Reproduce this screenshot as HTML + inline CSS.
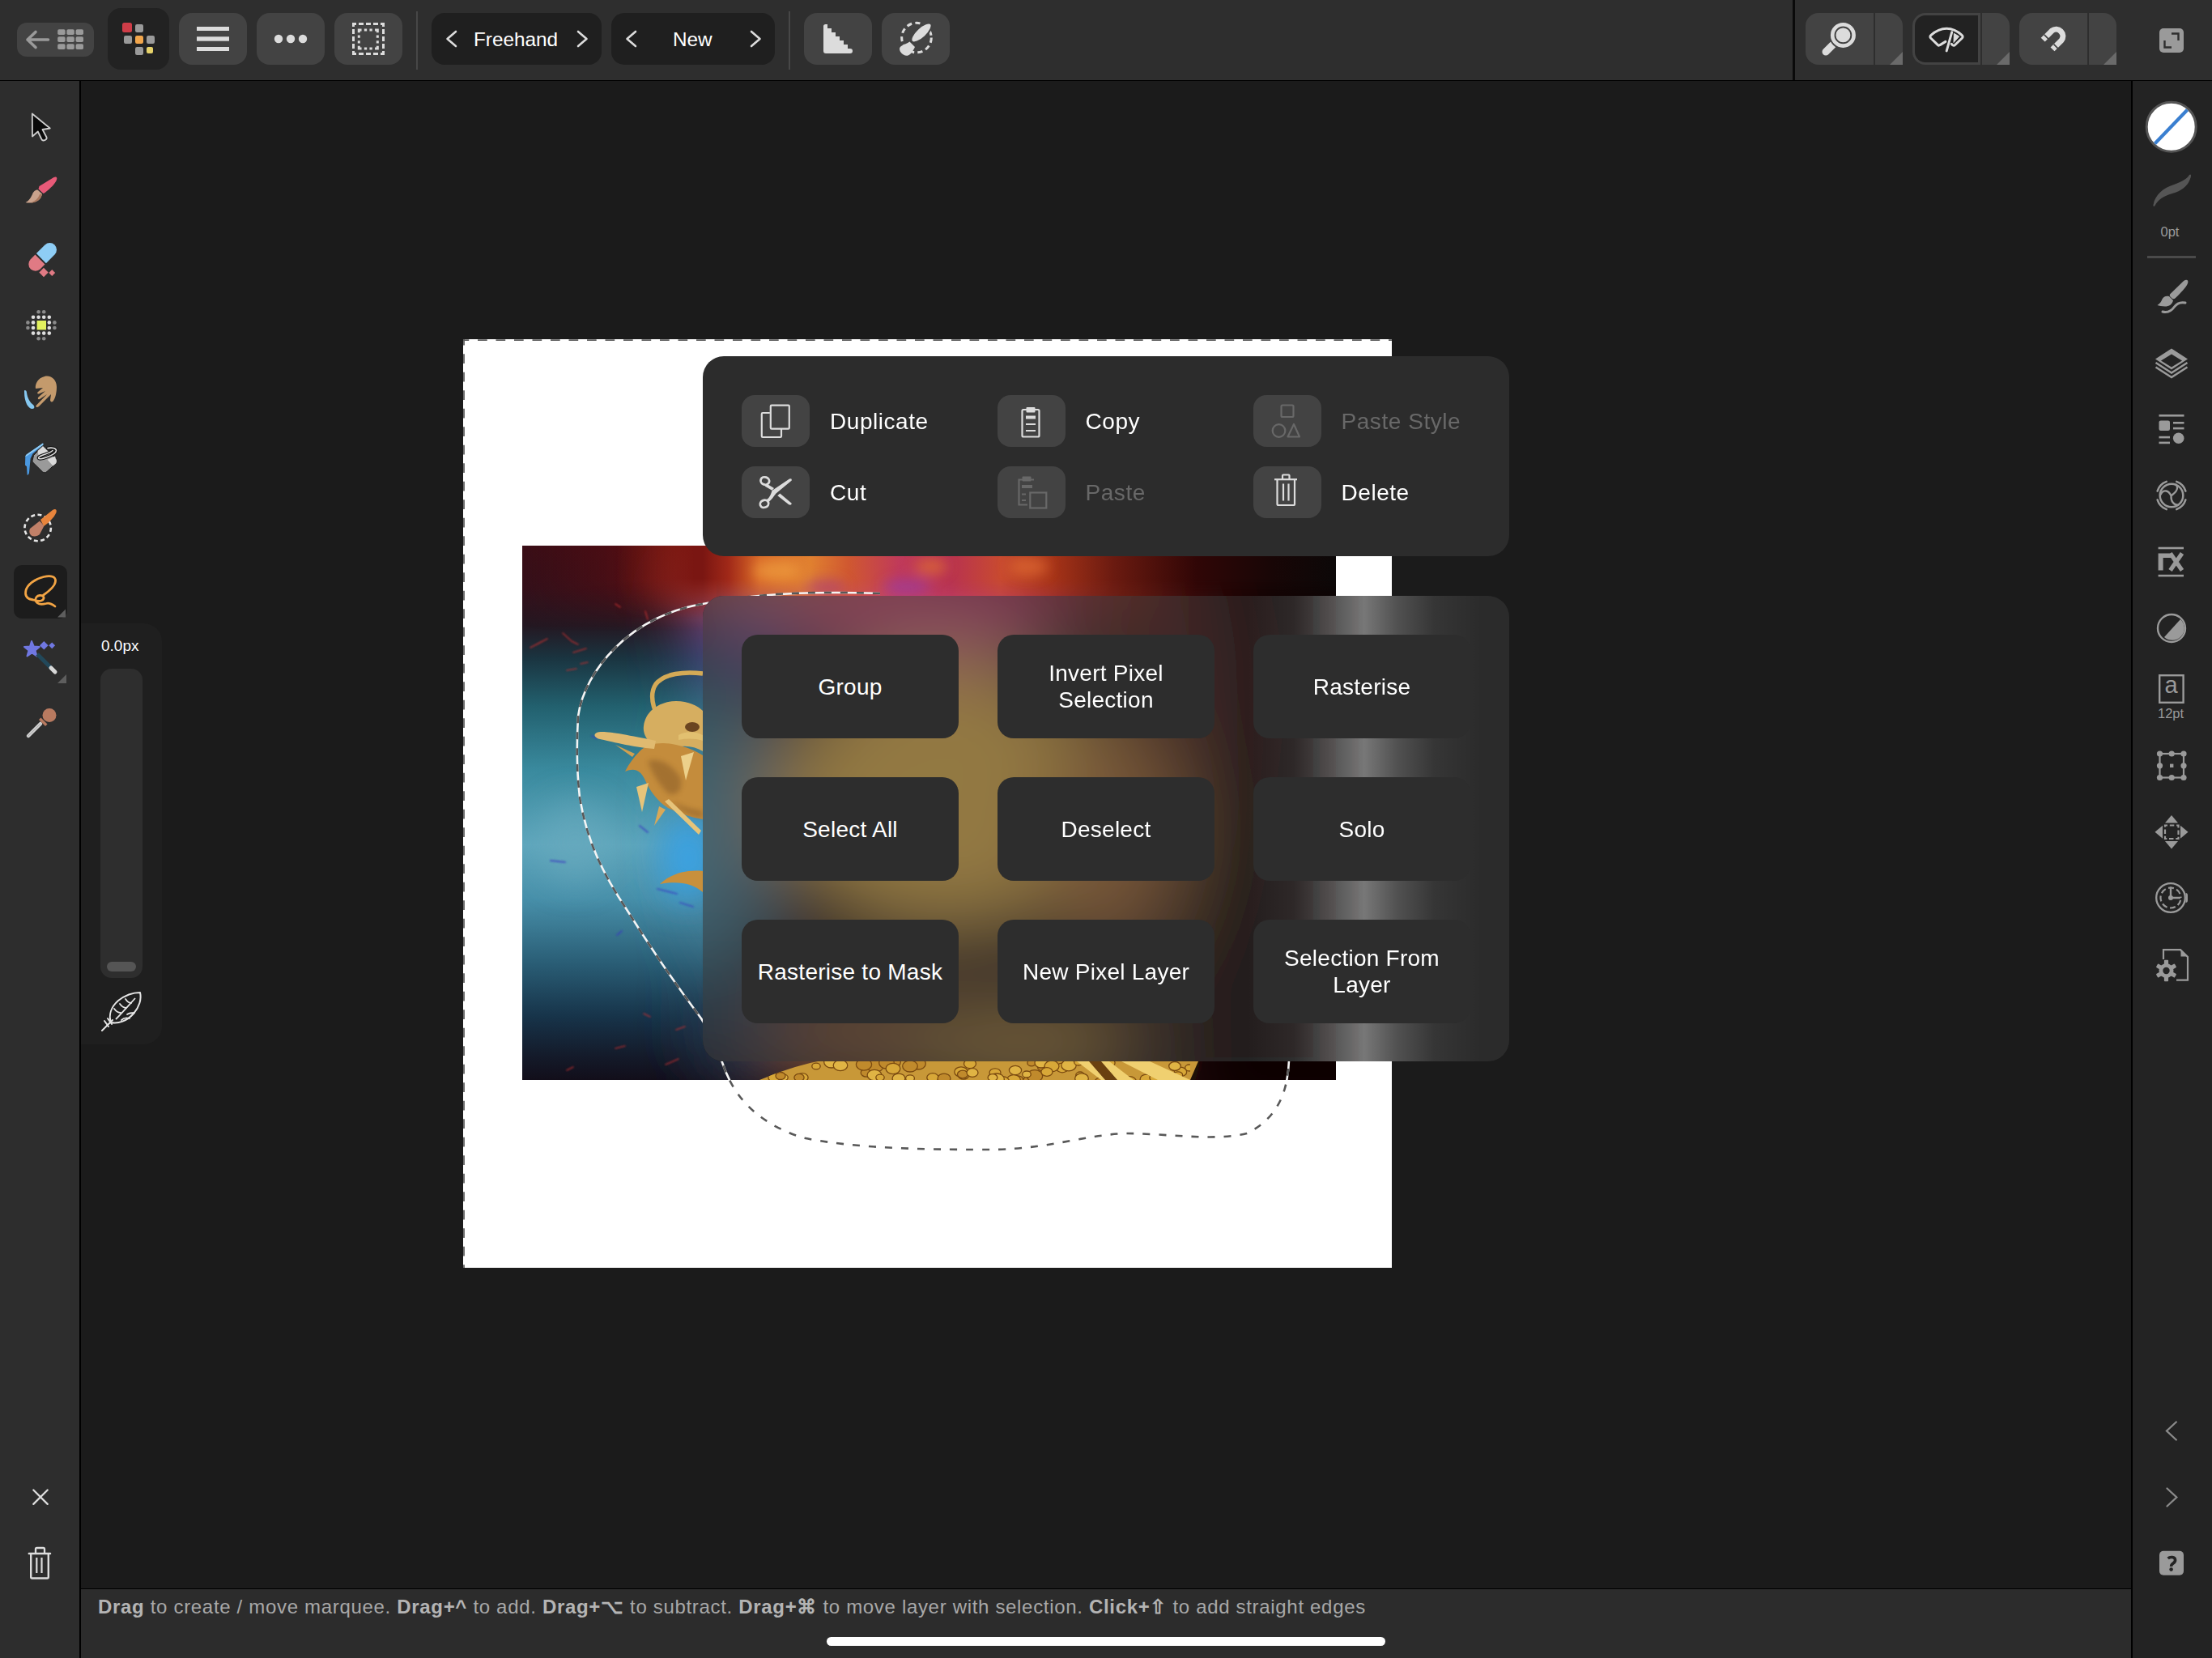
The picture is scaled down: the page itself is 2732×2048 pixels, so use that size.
<!DOCTYPE html>
<html><head><meta charset="utf-8">
<style>
*{margin:0;padding:0;box-sizing:border-box}
html,body{width:2732px;height:2048px;overflow:hidden;background:#1b1b1b;font-family:"Liberation Sans",sans-serif;position:relative}
.a{position:absolute}
.txt{white-space:nowrap}
#top{left:0;top:0;width:2732px;height:99px;background:#2e2e2e}
#topline{left:0;top:99px;width:2732px;height:1px;background:#000}
#left{left:0;top:100px;width:98px;height:1948px;background:#2d2d2d}
#leftline{left:98px;top:100px;width:2px;height:1948px;background:#000}
#right{left:2634px;top:100px;width:98px;height:1948px;background:#232323}
#rightline{left:2632px;top:100px;width:2px;height:1948px;background:#000}
#status{left:100px;top:1963px;width:2532px;height:85px;background:#2c2c2c}
#statusline{left:100px;top:1962px;width:2532px;height:1px;background:#000}
.btn{position:absolute;background:#434343;border-radius:16px}
.pill{position:absolute;background:#1f1f1f;border-radius:16px}
.ib{position:absolute;width:84px;height:64px;background:#434343;border-radius:16px}
.lbl{position:absolute;font-size:28px;color:#fff;white-space:nowrap;line-height:32px;letter-spacing:0.55px;margin-top:0.6px}
.gb{position:absolute;width:268px;height:128px;background:#2d2d2d;border-radius:20px;color:#fff;font-size:28px;display:flex;align-items:center;justify-content:center;text-align:center;line-height:33px;letter-spacing:0.25px}
</style></head><body>
<div id="top" class="a"></div>
<div id="topline" class="a"></div>
<div id="left" class="a"></div>
<div id="leftline" class="a"></div>
<div id="right" class="a"></div>
<div id="rightline" class="a"></div>
<div id="status" class="a"></div>
<div id="statusline" class="a"></div>

<svg class="a" style="left:0;top:0" width="2732" height="2048" viewBox="0 0 2732 2048">
<defs>
 <filter id="b1" filterUnits="userSpaceOnUse" x="600" y="600" width="1100" height="800"><feGaussianBlur stdDeviation="0.8"/></filter>
 <filter id="b3" filterUnits="userSpaceOnUse" x="600" y="600" width="1100" height="800"><feGaussianBlur stdDeviation="3"/></filter>
 <filter id="b8" filterUnits="userSpaceOnUse" x="600" y="600" width="1100" height="800"><feGaussianBlur stdDeviation="8"/></filter>
 <filter id="b20" filterUnits="userSpaceOnUse" x="500" y="500" width="1300" height="1000"><feGaussianBlur stdDeviation="20"/></filter>
 <filter id="bigb40" filterUnits="userSpaceOnUse" x="400" y="400" width="1500" height="1200"><feGaussianBlur stdDeviation="40"/></filter>
 <filter id="pblur" filterUnits="userSpaceOnUse" x="600" y="500" width="1500" height="1000"><feGaussianBlur stdDeviation="30"/></filter>
 <clipPath id="imgclip"><rect x="645" y="674" width="1005" height="660"/></clipPath>
 <clipPath id="pclip"><rect x="868" y="736" width="996" height="575" rx="26"/></clipPath>
 <linearGradient id="gbase" gradientUnits="userSpaceOnUse" x1="0" y1="674" x2="0" y2="1334">
   <stop offset="0" stop-color="#3a0e16"/>
   <stop offset="0.08" stop-color="#34101a"/>
   <stop offset="0.15" stop-color="#241822"/>
   <stop offset="0.21" stop-color="#1a3440"/>
   <stop offset="0.3" stop-color="#22606e"/>
   <stop offset="0.42" stop-color="#3a8a9e"/>
   <stop offset="0.56" stop-color="#5ea6bc"/>
   <stop offset="0.66" stop-color="#4890aa"/>
   <stop offset="0.78" stop-color="#2a5e76"/>
   <stop offset="0.88" stop-color="#17344a"/>
   <stop offset="0.95" stop-color="#141c2c"/>
   <stop offset="1" stop-color="#120e1a"/>
 </linearGradient>
 <linearGradient id="redtop" gradientUnits="userSpaceOnUse" x1="645" y1="0" x2="880" y2="0">
   <stop offset="0" stop-color="#5a0a10" stop-opacity="0"/>
   <stop offset="0.6" stop-color="#6a0e10" stop-opacity="0.5"/>
   <stop offset="1" stop-color="#9a1a10" stop-opacity="0.9"/>
 </linearGradient>
 <linearGradient id="redtopv" x1="0" y1="0" x2="0" y2="1">
   <stop offset="0" stop-color="#fff"/>
   <stop offset="0.3" stop-color="#fff"/>
   <stop offset="0.75" stop-color="#000"/>
 </linearGradient>
 <mask id="rtm"><rect x="645" y="674" width="240" height="140" fill="url(#redtopv)"/></mask>
 <linearGradient id="band" gradientUnits="userSpaceOnUse" x1="1540" y1="0" x2="1830" y2="0">
   <stop offset="0" stop-color="#fff" stop-opacity="0"/>
   <stop offset="0.2" stop-color="#fff" stop-opacity="0.05"/>
   <stop offset="0.34" stop-color="#fff" stop-opacity="0.18"/>
   <stop offset="0.5" stop-color="#fff" stop-opacity="0.36"/>
   <stop offset="0.64" stop-color="#fff" stop-opacity="0.18"/>
   <stop offset="0.8" stop-color="#fff" stop-opacity="0.05"/>
   <stop offset="1" stop-color="#fff" stop-opacity="0"/>
 </linearGradient>
 <linearGradient id="lfade" gradientUnits="userSpaceOnUse" x1="645" y1="0" x2="1000" y2="0">
   <stop offset="0" stop-color="#fff"/>
   <stop offset="0.62" stop-color="#fff"/>
   <stop offset="1" stop-color="#000"/>
 </linearGradient>
 <mask id="lmask"><rect x="645" y="674" width="1005" height="660" fill="url(#lfade)"/></mask>
 <g id="img">
  <g clip-path="url(#imgclip)">
   <rect x="645" y="674" width="1005" height="660" fill="#1c0c10"/>
   <rect x="645" y="674" width="1005" height="660" fill="url(#gbase)" mask="url(#lmask)"/>
   <rect x="645" y="674" width="240" height="140" fill="url(#redtop)" mask="url(#rtm)"/>
   <g filter="url(#bigb40)">
    <rect x="1470" y="600" width="300" height="800" fill="#100505"/>
    <ellipse cx="1430" cy="860" rx="70" ry="200" fill="#4a1414"/>
    <ellipse cx="1020" cy="705" rx="190" ry="45" fill="#e07028"/>
    <ellipse cx="1290" cy="705" rx="120" ry="40" fill="#b83a20"/>
    <ellipse cx="1140" cy="765" rx="170" ry="65" fill="#c83c7c"/>
    <ellipse cx="920" cy="790" rx="70" ry="60" fill="#5a4a98"/>
    <ellipse cx="900" cy="1020" rx="45" ry="170" fill="#4a8098"/>
    <ellipse cx="1170" cy="985" rx="220" ry="170" fill="#e6b44a"/>
    <ellipse cx="1370" cy="1040" rx="80" ry="150" fill="#b07034"/>
    <ellipse cx="1060" cy="1275" rx="130" ry="60" fill="#8a5a38"/>
    <ellipse cx="1260" cy="1290" rx="150" ry="60" fill="#a88038"/>
    <ellipse cx="915" cy="1270" rx="50" ry="70" fill="#2a3a50"/>
   </g>
  </g>
 </g>
</defs>
<rect x="572" y="419" width="1147" height="1147" fill="#fff"/>
<use href="#img"/>
<g clip-path="url(#imgclip)">
 <!-- top strip nebula texture -->
 <linearGradient id="topstrip" gradientUnits="userSpaceOnUse" x1="868" y1="0" x2="1650" y2="0">
  <stop offset="0" stop-color="#7a1612"/>
  <stop offset="0.04" stop-color="#a02818"/>
  <stop offset="0.09" stop-color="#d86828"/>
  <stop offset="0.17" stop-color="#e08030"/>
  <stop offset="0.23" stop-color="#d05830"/>
  <stop offset="0.31" stop-color="#c03a5a"/>
  <stop offset="0.39" stop-color="#b83250"/>
  <stop offset="0.47" stop-color="#c84a30"/>
  <stop offset="0.55" stop-color="#a83418"/>
  <stop offset="0.65" stop-color="#6a1a10"/>
  <stop offset="0.78" stop-color="#300606"/>
  <stop offset="0.9" stop-color="#180606"/>
  <stop offset="1" stop-color="#0c0808"/>
 </linearGradient>
 <linearGradient id="tsl" x1="0" y1="0" x2="1" y2="0"><stop offset="0" stop-color="#7a1612" stop-opacity="0"/><stop offset="0.9" stop-color="#7a1612"/><stop offset="1" stop-color="#7a1612"/></linearGradient>
 <mask id="tsm"><rect x="860" y="674" width="800" height="90" fill="url(#tslv)"/></mask>
 <rect x="868" y="674" width="782" height="90" fill="url(#topstrip)" mask="url(#tsm)"/>
 <linearGradient id="tslv" x1="0" y1="0" x2="0" y2="1"><stop offset="0" stop-color="#fff"/><stop offset="0.45" stop-color="#fff"/><stop offset="1" stop-color="#000"/></linearGradient>
 <mask id="tslm"><rect x="760" y="674" width="112" height="90" fill="url(#tslv)"/></mask>
 <rect x="760" y="674" width="108" height="90" fill="url(#tsl)" mask="url(#tslm)"/>
 <g filter="url(#b8)" opacity="0.7">
  <ellipse cx="960" cy="705" rx="30" ry="12" fill="#f0a040"/>
  <ellipse cx="1020" cy="725" rx="25" ry="10" fill="#b04070"/>
  <ellipse cx="1150" cy="700" rx="20" ry="10" fill="#e07030"/>
  <ellipse cx="1120" cy="725" rx="30" ry="10" fill="#9a3aa0"/>
  <ellipse cx="1270" cy="700" rx="25" ry="12" fill="#e06a30"/>
 </g>
 <g filter="url(#b20)">
  <ellipse cx="850" cy="1060" rx="35" ry="55" fill="#3aa2e2"/>
  <ellipse cx="710" cy="1040" rx="45" ry="50" fill="#6aaabe" opacity="0.6"/>
 </g>
 <!-- speckles -->
 <g filter="url(#b1)" stroke="#c83030" fill="none" stroke-width="1.6" opacity="0.75" stroke-linecap="round">
  <path d="M655 800 L 670 792 M 661 797 L 676 789"/>
  <path d="M695 782 L 706 792 L 714 796"/>
  <path d="M708 806 L 724 801"/>
  <path d="M717 820 L 726 818"/>
  <path d="M760 746 L 766 750 M 797 755 L 800 765"/>
  <path d="M700 828 L 712 826"/>
  <path d="M795 1252 L 803 1256 M 760 1295 L 772 1292 M 822 1315 L 838 1308 M 835 1272 L 846 1268 M 700 1322 L 708 1318"/>
 </g>
 <g filter="url(#b1)" stroke="#3a3ac0" fill="none" stroke-width="1.8" opacity="0.75" stroke-linecap="round">
  <path d="M680 1063 L 698 1065"/>
  <path d="M812 1098 L 836 1104 M 840 1115 L 856 1120"/>
  <path d="M762 1155 L 768 1150"/>
  <path d="M731 909 L 737 912"/>
  <path d="M790 1020 L 800 1028"/>
 </g>
 <!-- bottom golden scales -->
 <path d="M938 1334 C 960 1325 985 1316 1010 1311 L 1480 1311 L 1470 1334 Z" fill="#c89838"/>
 <clipPath id="coinclip"><path d="M938 1334 C 960 1325 985 1316 1010 1311 L 1470 1311 L 1470 1334 Z"/></clipPath>
 <g clip-path="url(#coinclip)">
  <ellipse cx="1070" cy="1325" rx="6.8" ry="5.1" fill="#c08a2c" stroke="#7a4a10" stroke-width="1.3"/>
  <ellipse cx="1274" cy="1313" rx="5.1" ry="3.8" fill="#c08a2c" stroke="#7a4a10" stroke-width="1.3"/>
  <ellipse cx="1081" cy="1317" rx="10.0" ry="7.5" fill="#c08a2c" stroke="#7a4a10" stroke-width="1.3"/>
  <ellipse cx="1229" cy="1325" rx="7.0" ry="5.2" fill="#d8a838" stroke="#7a4a10" stroke-width="1.3"/>
  <ellipse cx="1067" cy="1315" rx="9.6" ry="7.2" fill="#c08a2c" stroke="#7a4a10" stroke-width="1.3"/>
  <ellipse cx="1334" cy="1328" rx="5.3" ry="4.0" fill="#d8a838" stroke="#7a4a10" stroke-width="1.3"/>
  <ellipse cx="1103" cy="1312" rx="9.3" ry="7.0" fill="#c08a2c" stroke="#7a4a10" stroke-width="1.3"/>
  <ellipse cx="1257" cy="1334" rx="6.9" ry="5.2" fill="#c08a2c" stroke="#7a4a10" stroke-width="1.3"/>
  <ellipse cx="1152" cy="1331" rx="7.2" ry="5.4" fill="#d8a838" stroke="#7a4a10" stroke-width="1.3"/>
  <ellipse cx="1406" cy="1313" rx="5.7" ry="4.3" fill="#d8a838" stroke="#7a4a10" stroke-width="1.3"/>
  <ellipse cx="1080" cy="1328" rx="8.9" ry="6.7" fill="#e0b444" stroke="#7a4a10" stroke-width="1.3"/>
  <ellipse cx="1166" cy="1332" rx="7.9" ry="5.9" fill="#c08a2c" stroke="#7a4a10" stroke-width="1.3"/>
  <ellipse cx="1252" cy="1334" rx="8.4" ry="6.3" fill="#d8a838" stroke="#7a4a10" stroke-width="1.3"/>
  <ellipse cx="1395" cy="1336" rx="8.4" ry="6.3" fill="#d8a838" stroke="#7a4a10" stroke-width="1.3"/>
  <ellipse cx="1312" cy="1319" rx="7.7" ry="5.8" fill="#d8a838" stroke="#7a4a10" stroke-width="1.3"/>
  <ellipse cx="1320" cy="1316" rx="9.2" ry="6.9" fill="#e0b444" stroke="#7a4a10" stroke-width="1.3"/>
  <ellipse cx="1095" cy="1313" rx="9.3" ry="7.0" fill="#c08a2c" stroke="#7a4a10" stroke-width="1.3"/>
  <ellipse cx="991" cy="1331" rx="7.1" ry="5.3" fill="#d8a838" stroke="#7a4a10" stroke-width="1.3"/>
  <ellipse cx="956" cy="1331" rx="7.1" ry="5.3" fill="#d8a838" stroke="#7a4a10" stroke-width="1.3"/>
  <ellipse cx="968" cy="1331" rx="5.2" ry="3.9" fill="#e0b444" stroke="#7a4a10" stroke-width="1.3"/>
  <ellipse cx="1234" cy="1334" rx="6.4" ry="4.8" fill="#d8a838" stroke="#7a4a10" stroke-width="1.3"/>
  <ellipse cx="1469" cy="1319" rx="5.4" ry="4.0" fill="#d8a838" stroke="#7a4a10" stroke-width="1.3"/>
  <ellipse cx="1443" cy="1335" rx="6.5" ry="4.8" fill="#e0b444" stroke="#7a4a10" stroke-width="1.3"/>
  <ellipse cx="1027" cy="1312" rx="9.3" ry="7.0" fill="#e0b444" stroke="#7a4a10" stroke-width="1.3"/>
  <ellipse cx="1134" cy="1314" rx="9.3" ry="7.0" fill="#c08a2c" stroke="#7a4a10" stroke-width="1.3"/>
  <ellipse cx="1187" cy="1324" rx="8.2" ry="6.2" fill="#d8a838" stroke="#7a4a10" stroke-width="1.3"/>
  <ellipse cx="1271" cy="1335" rx="7.5" ry="5.7" fill="#c08a2c" stroke="#7a4a10" stroke-width="1.3"/>
  <ellipse cx="1278" cy="1329" rx="9.7" ry="7.3" fill="#c08a2c" stroke="#7a4a10" stroke-width="1.3"/>
  <ellipse cx="1458" cy="1324" rx="7.7" ry="5.8" fill="#d8a838" stroke="#7a4a10" stroke-width="1.3"/>
  <ellipse cx="1359" cy="1336" rx="6.6" ry="4.9" fill="#c08a2c" stroke="#7a4a10" stroke-width="1.3"/>
  <ellipse cx="1268" cy="1327" rx="5.3" ry="4.0" fill="#e0b444" stroke="#7a4a10" stroke-width="1.3"/>
  <ellipse cx="1190" cy="1328" rx="6.8" ry="5.1" fill="#e0b444" stroke="#7a4a10" stroke-width="1.3"/>
  <ellipse cx="1332" cy="1312" rx="5.3" ry="4.0" fill="#d8a838" stroke="#7a4a10" stroke-width="1.3"/>
  <ellipse cx="1451" cy="1317" rx="7.3" ry="5.5" fill="#e0b444" stroke="#7a4a10" stroke-width="1.3"/>
  <ellipse cx="1038" cy="1316" rx="8.8" ry="6.6" fill="#e0b444" stroke="#7a4a10" stroke-width="1.3"/>
  <ellipse cx="1103" cy="1320" rx="8.9" ry="6.6" fill="#d8a838" stroke="#7a4a10" stroke-width="1.3"/>
  <ellipse cx="1455" cy="1328" rx="5.7" ry="4.2" fill="#d8a838" stroke="#7a4a10" stroke-width="1.3"/>
  <ellipse cx="1288" cy="1318" rx="6.6" ry="5.0" fill="#c08a2c" stroke="#7a4a10" stroke-width="1.3"/>
  <ellipse cx="1286" cy="1313" rx="8.0" ry="6.0" fill="#e0b444" stroke="#7a4a10" stroke-width="1.3"/>
  <ellipse cx="1299" cy="1317" rx="9.0" ry="6.8" fill="#d8a838" stroke="#7a4a10" stroke-width="1.3"/>
  <ellipse cx="987" cy="1331" rx="6.1" ry="4.6" fill="#c08a2c" stroke="#7a4a10" stroke-width="1.3"/>
  <ellipse cx="1087" cy="1331" rx="5.2" ry="3.9" fill="#d8a838" stroke="#7a4a10" stroke-width="1.3"/>
  <ellipse cx="1110" cy="1332" rx="7.9" ry="5.9" fill="#e0b444" stroke="#7a4a10" stroke-width="1.3"/>
  <ellipse cx="1124" cy="1332" rx="5.4" ry="4.1" fill="#e0b444" stroke="#7a4a10" stroke-width="1.3"/>
  <ellipse cx="1254" cy="1322" rx="7.6" ry="5.7" fill="#e0b444" stroke="#7a4a10" stroke-width="1.3"/>
  <ellipse cx="1189" cy="1327" rx="6.5" ry="4.8" fill="#c08a2c" stroke="#7a4a10" stroke-width="1.3"/>
  <ellipse cx="964" cy="1329" rx="6.0" ry="4.5" fill="#c08a2c" stroke="#7a4a10" stroke-width="1.3"/>
  <ellipse cx="1440" cy="1333" rx="9.9" ry="7.5" fill="#c08a2c" stroke="#7a4a10" stroke-width="1.3"/>
  <ellipse cx="1238" cy="1336" rx="8.6" ry="6.4" fill="#d8a838" stroke="#7a4a10" stroke-width="1.3"/>
  <ellipse cx="1336" cy="1332" rx="8.3" ry="6.2" fill="#e0b444" stroke="#7a4a10" stroke-width="1.3"/>
  <ellipse cx="1231" cy="1333" rx="9.3" ry="7.0" fill="#e0b444" stroke="#7a4a10" stroke-width="1.3"/>
  <ellipse cx="1008" cy="1317" rx="5.2" ry="3.9" fill="#d8a838" stroke="#7a4a10" stroke-width="1.3"/>
  <ellipse cx="1416" cy="1333" rx="7.9" ry="5.9" fill="#d8a838" stroke="#7a4a10" stroke-width="1.3"/>
  <ellipse cx="1198" cy="1314" rx="7.5" ry="5.6" fill="#d8a838" stroke="#7a4a10" stroke-width="1.3"/>
  <ellipse cx="1293" cy="1324" rx="7.1" ry="5.3" fill="#d8a838" stroke="#7a4a10" stroke-width="1.3"/>
  <ellipse cx="1124" cy="1317" rx="9.3" ry="7.0" fill="#c08a2c" stroke="#7a4a10" stroke-width="1.3"/>
  <ellipse cx="1371" cy="1313" rx="6.1" ry="4.6" fill="#d8a838" stroke="#7a4a10" stroke-width="1.3"/>
  <ellipse cx="1226" cy="1331" rx="5.9" ry="4.4" fill="#e0b444" stroke="#7a4a10" stroke-width="1.3"/>
  <ellipse cx="1429" cy="1331" rx="9.1" ry="6.8" fill="#d8a838" stroke="#7a4a10" stroke-width="1.3"/>
  <ellipse cx="1201" cy="1325" rx="7.0" ry="5.3" fill="#e0b444" stroke="#7a4a10" stroke-width="1.3"/>
  <path d="M1330 1311 L1370 1311 L1400 1334 L1360 1334Z M1385 1311 L1420 1311 L1470 1334 L1430 1334Z" fill="#f0d070"/>
  <path d="M1345 1311 L1360 1311 L1380 1334 L1365 1334Z" fill="#6a4010"/>
 </g>
 <!-- dragon head -->
 <g>
  <path d="M826 906 C 808 884 800 860 810 845 C 820 832 845 829 868 832" stroke="#d4aa56" stroke-width="5.5" fill="none"/>
  <path d="M795 897 C 797 878 815 866 835 866 C 850 866 862 872 868 878 L868 928 C 855 920 840 920 825 926 L 803 917 C 797 911 794 904 795 897 Z" fill="#d6ae60"/>
  <path d="M790 928 C 800 918 818 916 835 920 C 850 923 860 928 868 933 L868 1012 C 855 1010 840 1005 825 998 C 812 990 802 976 796 962 C 791 952 784 948 772 953 C 777 943 783 935 790 928 Z" fill="#c48c3c"/>
  <ellipse cx="855" cy="898" rx="9" ry="6" fill="#6a4420"/>
  <path d="M838 908 C 848 902 860 904 868 908 L868 915 C 858 912 848 912 838 914Z" fill="#e2c070"/>
  <g filter="url(#b3)" fill="#5a3418" opacity="0.3">
   <path d="M800 940 C 815 935 830 945 840 960 C 845 975 835 985 825 980 C 815 970 805 955 800 940Z"/>
   <path d="M830 990 C 840 995 855 1000 868 1002 L868 1010 C 850 1008 838 1000 830 990Z"/>
  </g>
  <path d="M737 905 C 745 902 770 907 810 915 L 808 925 C 780 923 752 915 741 913 C 735 912 732 907 737 905Z" fill="#e0ba70"/>
  <path d="M760 920 L 784 931 L 781 935 Z" fill="#d0a050"/>
  <path d="M793 1003 L 786 972 L 801 967 Z" fill="#e6c47a"/>
  <path d="M847 964 L 841 934 L 857 929 Z" fill="#ecd08a"/>
  <path d="M821 990 L 826 987 L 866 1026 L 863 1031 Z" fill="#e6c47a"/>
  <path d="M808 1020 L 814 996 L 822 1000 Z" fill="#d8a858"/>
  <path d="M815 1092 C 830 1078 850 1074 868 1076 L 868 1102 C 855 1090 835 1088 815 1092Z" fill="#c8903c"/>
 </g>
</g>
<!-- doc border dashes top & left -->
<line x1="572" y1="420.2" x2="1719" y2="420.2" stroke="#5e5e5e" stroke-width="1.8" stroke-dasharray="11.7 10.8" stroke-dashoffset="4.5"/>
<line x1="573" y1="419" x2="573" y2="1566" stroke="#5e5e5e" stroke-width="1.8" stroke-dasharray="11.7 10.8" stroke-dashoffset="4.2"/>
<!-- lasso -->
<path d="M1087 733 C 1000 730 930 733 868 746 C 830 752 790 770 760 800 C 735 825 718 855 714 885 C 712 920 712 950 716 985 C 725 1040 745 1080 775 1125 C 800 1165 830 1210 866 1258 C 880 1280 888 1300 893 1315 C 905 1350 930 1385 990 1405 C 1060 1420 1160 1420 1230 1420 C 1300 1418 1340 1402 1390 1400 C 1440 1400 1500 1410 1540 1400 C 1570 1385 1590 1360 1592 1310" fill="none" stroke="#f4f4f4" stroke-width="2.6" clip-path="url(#imgclip)"/>
<path d="M1087 733 C 1000 730 930 733 868 746 C 830 752 790 770 760 800 C 735 825 718 855 714 885 C 712 920 712 950 716 985 C 725 1040 745 1080 775 1125 C 800 1165 830 1210 866 1258 C 880 1280 888 1300 893 1315 C 905 1350 930 1385 990 1405 C 1060 1420 1160 1420 1230 1420 C 1300 1418 1340 1402 1390 1400 C 1440 1400 1500 1410 1540 1400 C 1570 1385 1590 1360 1592 1310" fill="none" stroke="#585858" stroke-width="2.6" stroke-dasharray="9 11"/>
<!-- top menu panel -->
<rect x="868" y="440" width="996" height="247" rx="26" fill="#2c2c2c"/>
<!-- bottom blurred panel -->
<g clip-path="url(#pclip)">
 <rect x="868" y="736" width="996" height="575" fill="#1b1b1b"/>
 <g filter="url(#pblur)">
  <rect x="600" y="500" width="1500" height="1000" fill="#1b1b1b"/>
  <use href="#img"/>
 </g>
 <rect x="868" y="736" width="996" height="575" fill="#3c3c3c" fill-opacity="0.49"/>
 <rect x="1540" y="736" width="290" height="575" fill="url(#band)"/>
</g>
</svg>

<!-- TOP BAR -->
<div class="btn" style="left:21px;top:28px;width:95px;height:42px;border-radius:12px"></div>
<svg class="a" style="left:21px;top:28px" width="95" height="42" viewBox="0 0 95 42">
 <path d="M38.5 21 H13 M23 11.5 L13 21 L23 30.5" stroke="#9a9a9a" stroke-width="3.6" fill="none" stroke-linecap="round" stroke-linejoin="round"/>
 <g fill="#9a9a9a">
  <rect x="50.2" y="8.2" width="9.4" height="6.8" rx="1.8"/><rect x="61.4" y="8.2" width="9.4" height="6.8" rx="1.8"/><rect x="72.6" y="8.2" width="9.4" height="6.8" rx="1.8"/>
  <rect x="50.2" y="17.2" width="9.4" height="6.8" rx="1.8"/><rect x="61.4" y="17.2" width="9.4" height="6.8" rx="1.8"/><rect x="72.6" y="17.2" width="9.4" height="6.8" rx="1.8"/>
  <rect x="50.2" y="26.2" width="9.4" height="6.8" rx="1.8"/><rect x="61.4" y="26.2" width="9.4" height="6.8" rx="1.8"/><rect x="72.6" y="26.2" width="9.4" height="6.8" rx="1.8"/>
 </g>
</svg>
<div class="btn" style="left:133px;top:10px;width:76px;height:76px;background:#222;border-radius:16px"></div>
<svg class="a" style="left:133px;top:10px" width="76" height="76" viewBox="0 0 76 76">
 <rect x="18" y="18" width="12" height="12" rx="2.5" fill="#cf3d48"/>
 <rect x="34" y="20" width="10" height="10" rx="2.2" fill="#9a9a9a"/>
 <rect x="20" y="34" width="10" height="10" rx="2.2" fill="#9a9a9a"/>
 <rect x="34" y="34" width="10" height="10" rx="2.2" fill="#f2a64c"/>
 <rect x="48" y="34" width="10" height="10" rx="2.2" fill="#9a9a9a"/>
 <rect x="34" y="48" width="10" height="10" rx="2.2" fill="#9a9a9a"/>
 <rect x="48" y="48" width="8" height="8" rx="2" fill="#e6d26a"/>
</svg>
<div class="btn" style="left:221px;top:16px;width:84px;height:64px"></div>
<svg class="a" style="left:221px;top:16px" width="84" height="64" viewBox="0 0 84 64">
 <g fill="#dcdcdc"><rect x="22" y="17" width="40" height="5"/><rect x="22" y="29.3" width="40" height="5.4"/><rect x="22" y="42" width="40" height="5"/></g>
</svg>
<div class="btn" style="left:317px;top:16px;width:84px;height:64px"></div>
<svg class="a" style="left:317px;top:16px" width="84" height="64" viewBox="0 0 84 64">
 <g fill="#dcdcdc"><circle cx="27" cy="32" r="5.2"/><circle cx="42" cy="32" r="5.2"/><circle cx="57" cy="32" r="5.2"/></g>
</svg>
<div class="btn" style="left:413px;top:16px;width:84px;height:64px"></div>
<svg class="a" style="left:413px;top:16px" width="84" height="64" viewBox="0 0 84 64">
 <path d="M23.5 13.5 H60.5 V50.5 H23.5 Z" stroke="#dcdcdc" stroke-width="3" fill="none" stroke-dasharray="7 3 6 3 6 3 6 3" stroke-dashoffset="3.5"/>
 <path d="M30.3 21 H53.3 V44 H30.3 Z" stroke="#dcdcdc" stroke-width="3" fill="none" stroke-dasharray="6.5 3.3 3.3 3.3 3.3 3.3" stroke-dashoffset="3.25"/>
</svg>
<div class="a" style="left:514px;top:14px;width:2px;height:72px;background:#474747"></div>
<div class="pill" style="left:533px;top:16px;width:210px;height:64px"></div>
<svg class="a" style="left:533px;top:16px" width="210" height="64" viewBox="0 0 210 64">
 <path d="M30 23 L19.5 32 L30 41" stroke="#dcdcdc" stroke-width="2.6" fill="none" stroke-linecap="round" stroke-linejoin="round"/>
 <path d="M181 23 L191.5 32 L181 41" stroke="#dcdcdc" stroke-width="2.6" fill="none" stroke-linecap="round" stroke-linejoin="round"/>
</svg>
<div class="a txt" style="left:585px;top:34.3px;font-size:24.3px;color:#fff;line-height:30px">Freehand</div>
<div class="pill" style="left:755px;top:16px;width:202px;height:64px"></div>
<svg class="a" style="left:755px;top:16px" width="202" height="64" viewBox="0 0 202 64">
 <path d="M30 23 L19.5 32 L30 41" stroke="#dcdcdc" stroke-width="2.6" fill="none" stroke-linecap="round" stroke-linejoin="round"/>
 <path d="M173 23 L183.5 32 L173 41" stroke="#dcdcdc" stroke-width="2.6" fill="none" stroke-linecap="round" stroke-linejoin="round"/>
</svg>
<div class="a txt" style="left:831px;top:34.3px;font-size:24.3px;color:#fff;line-height:30px">New</div>
<div class="a" style="left:974px;top:14px;width:2px;height:72px;background:#474747"></div>
<div class="btn" style="left:993px;top:16px;width:84px;height:64px"></div>
<svg class="a" style="left:993px;top:16px" width="84" height="64" viewBox="0 0 84 64">
 <path d="M24 16.5 Q24 14 26.5 14 H29 V19 H34 V24 H39 V29 H44 V34 H49 V39 H54 V44 H57 Q60 44 60 47 V47 Q60 50 57 50 H27 Q24 50 24 47 Z" fill="#dcdcdc"/>
</svg>
<div class="btn" style="left:1089px;top:16px;width:84px;height:64px"></div>
<svg class="a" style="left:1089px;top:16px" width="84" height="64" viewBox="0 0 84 64">
 <circle cx="43" cy="30.6" r="18.3" stroke="#dcdcdc" stroke-width="3" fill="none" stroke-dasharray="6.2 4.3"/>
 <ellipse cx="49" cy="24.4" rx="16.2" ry="6.6" transform="rotate(-43 49 24.4)" fill="#dcdcdc" stroke="#434343" stroke-width="2.2"/>
 <path d="M34.5 35.5 L 41 42 C 38.5 47.5 35.5 51.5 32.5 52.5 C 29.5 53.5 25.5 51.5 23.5 48.5 C 21.5 45.5 21.5 42.5 24 41 C 27.5 39 31.5 37.5 34.5 35.5 Z" fill="#dcdcdc"/>
</svg>

<div class="a" style="left:2214px;top:0;width:3px;height:99px;background:#0a0a0a"></div>
<!-- zoom button -->
<div class="btn" style="left:2230px;top:16px;width:120px;height:64px"></div>
<div class="a" style="left:2314px;top:16px;width:2px;height:64px;background:#2e2e2e"></div>
<svg class="a" style="left:2230px;top:16px" width="120" height="64" viewBox="0 0 120 64">
 <path d="M104 64 L120 48 L120 64Z" fill="#6a6a6a"/>
 <path d="M25 48 L35 38" stroke="#dcdcdc" stroke-width="9" stroke-linecap="round"/>
 <circle cx="46.4" cy="27.4" r="16.4" fill="#dcdcdc" stroke="#434343" stroke-width="1.8"/>
 <circle cx="46.4" cy="27.4" r="9.9" fill="none" stroke="#434343" stroke-width="1.9"/>
</svg>
<!-- wiper button -->
<div class="a" style="left:2362px;top:16px;width:84px;height:64px;background:#434343;border-radius:16px 0 0 16px"></div>
<div class="a" style="left:2365px;top:19px;width:78px;height:58px;background:#222;border-radius:13px 0 0 13px"></div>
<div class="a" style="left:2448px;top:16px;width:34px;height:64px;background:#434343;border-radius:0 16px 16px 0"></div>
<svg class="a" style="left:2448px;top:16px" width="34" height="64" viewBox="0 0 34 64">
 <path d="M18 64 L34 48 L34 64Z" fill="#6a6a6a"/>
</svg>
<svg class="a" style="left:2362px;top:16px" width="84" height="64" viewBox="0 0 84 64">
 <path d="M40.9 35.4 L34 39.6 C 33 40.3 32 40.2 31.2 39.4 L22.6 31 C 21.5 29.8 21.7 28.5 23 27.4 C 35 16.5 49.5 16.5 61 27.4 C 62.3 28.5 62.5 29.8 61.4 31 L52.6 39.5 C 51.8 40.3 50.6 40.4 49.5 39.6 L48.3 38.4" stroke="#dcdcdc" stroke-width="3" fill="none" stroke-linecap="round" stroke-linejoin="round"/>
 <path d="M42.2 46.9 L48.7 23.8" stroke="#dcdcdc" stroke-width="3" stroke-linecap="round"/>
 <path d="M51.4 25.3 L57.6 29 L51 36.5Z" fill="#dcdcdc" stroke="#dcdcdc" stroke-width="1" stroke-linejoin="round"/>
</svg>
<!-- magnet button -->
<div class="btn" style="left:2494px;top:16px;width:120px;height:64px"></div>
<div class="a" style="left:2578px;top:16px;width:2px;height:64px;background:#2e2e2e"></div>
<svg class="a" style="left:2494px;top:16px" width="120" height="64" viewBox="0 0 120 64">
 <path d="M104 64 L120 48 L120 64Z" fill="#6a6a6a"/>
 <path d="M29.2 33.1 L40.2 22.1 A8.4 8.4 0 0 1 52 33.9 L41 44.9" stroke="#dcdcdc" stroke-width="7" fill="none"/>
 <path d="M30.8 26.9 L36 32.1 M42.6 38.7 L47.8 43.9" stroke="#434343" stroke-width="1.7"/>
</svg>
<svg class="a" style="left:2667px;top:35px" width="30" height="30" viewBox="0 0 30 30">
 <rect x="0" y="0" width="30" height="30" rx="5" fill="#9a9a9a"/>
 <path d="M15 6.5 H23.5 V15 M6.5 15 V23.5 H15" stroke="#2e2e2e" stroke-width="2.4" fill="none"/>
</svg>

<!-- LEFT TOOLBAR -->
<svg class="a" style="left:0;top:100px" width="98" height="1948" viewBox="0 100 98 1948">
 <!-- cursor -->
 <path d="M39.8 140.5 L61.8 158.5 L52.5 160 L57.5 169.5 C58 171 57.5 172 56 172.8 L54.5 173.3 C53 173.8 52 173.3 51.4 172 L46.8 162.5 L40 168.5 Z" fill="#0a0a0a" stroke="#cfcfcf" stroke-width="1.8" stroke-linejoin="round"/>
 <!-- brush -->
 <path d="M48.5 230 L66.5 219 C69.5 217.5 71 219 70 222 C68 227 63 232 55.5 238 L53.5 239 L47.5 233.5 Z" fill="#e85a78"/>
 <path d="M46.5 234.5 L52 239.5 C51 246 46 250 38 250.5 C35 250.7 33 250.5 31.5 250 C36 248 38 244 40 240 C41.5 236 44 234.5 46.5 234.5Z" fill="#c9a28c"/>
 <path d="M52 239.5 C51 246 46 250 38 250.5 C42 249 47 246 49 240Z" fill="#a8765c"/>
 <!-- eraser -->
 <g transform="translate(53 317) rotate(-45)">
  <path d="M-3 -8.5 H12 A8.5 8.5 0 0 1 12 8.5 H-3 Z" fill="#8ecdf5"/>
  <path d="M-5 -8.5 H-13 A8.5 8.5 0 0 0 -13 8.5 H-5 Z" fill="#e07a84"/>
 </g>
 <rect x="50" y="332.5" width="8" height="8" transform="rotate(45 54 336.5)" fill="#e07a84"/>
 <rect x="61.5" y="334.2" width="5.5" height="5.5" transform="rotate(45 64.2 337)" fill="#e07a84"/>
 <!-- pixel -->
 <g fill="#dedede">
  <circle cx="41" cy="391.8" r="2.3"/><circle cx="47.6" cy="391.8" r="2.3"/><circle cx="54.2" cy="391.8" r="2.3"/><circle cx="60.8" cy="391.8" r="2.3"/>
  <circle cx="41" cy="398.4" r="2.3"/><circle cx="60.8" cy="398.4" r="2.3"/>
  <circle cx="41" cy="405" r="2.3"/><circle cx="60.8" cy="405" r="2.3"/>
  <circle cx="41" cy="411.6" r="2.3"/><circle cx="47.6" cy="411.6" r="2.3"/><circle cx="54.2" cy="411.6" r="2.3"/><circle cx="60.8" cy="411.6" r="2.3"/>
 </g>
 <g fill="#8a8a8a">
  <circle cx="47.6" cy="385.2" r="2.3"/><circle cx="54.2" cy="385.2" r="2.3"/>
  <circle cx="34.4" cy="398.4" r="2.3"/><circle cx="67.4" cy="398.4" r="2.3"/>
  <circle cx="34.4" cy="405" r="2.3"/><circle cx="67.4" cy="405" r="2.3"/>
  <circle cx="47.6" cy="418.2" r="2.3"/><circle cx="54.2" cy="418.2" r="2.3"/>
 </g>
 <rect x="45.6" y="396" width="11.4" height="11.4" fill="#e2f25e"/>
 <!-- smudge -->
 <path d="M44 480 C43 474 47 467 55 465 C63 463 70 469 70 478 C70 486 68 492 66 495 C65 497 62 497 62 494 L63 487 L48 502 C46 504 44 503 44.5 501 L58 487 L49 493 C47 494 46 492 47.5 490.5 L56 483 L48 486.5 C46 487 45.5 485 47 484 L53 479 Z" fill="#c49a6c"/>
 <path d="M30.5 482 C32 482 33 483 33 485 C34 492 37 497 41 500 C43 502 43 505 40 505 C35 505 30 497 30 484 C30 483 30 482 30.5 482Z" fill="#86c8f0"/>
 <!-- fill bucket -->
 <path d="M52.9 547.6 C 54 548.2 53.6 549.6 52.5 550.3 L 40.5 560.6 L 37.6 566.5 L 36 584 C 35.5 586.5 33.8 587 33.6 586.4 L 33 576.2 L 31 574.5 L 31.3 563.9 C 31.5 562.5 32.5 561.3 34 560.5 Z" fill="#4a98e0"/>
 <path d="M52.9 547.6 C 54 548.2 53.6 549.6 52.5 550.3 L 33.5 563 L 31.3 563.9 C 31.5 562.5 32.5 561.3 34 560.5 Z" fill="#90ccf4"/>
 <path d="M53 551 L 68.8 566.5 C 70.3 568 70.3 571 69 572.5 L 58 582.5 C 56.5 584 54 584.2 52.5 582.8 L 41 571.5 C 39.8 570.3 39.8 568.5 40.5 567 L 41.5 562.5 Z" fill="#9a9a9a" stroke="#1a1a1a" stroke-width="1"/>
 <path d="M53 551 L 60.5 558.5 L 48 564.5 L 46.5 557 Z" fill="#dadada"/>
 <path d="M58.5 567.8 L 68 563.5 L 68.8 566.5 C 70.3 568 70.3 571 69 572.5 L 65.5 575.5 Z" fill="#dadada"/>
 <path d="M59 553.6 C 64 552.5 69.5 553.5 69.5 556.5 C 69.5 559.5 64 562.5 57 565 C 52 566.8 48 567.5 47.5 566 C 47 564.5 51 562.5 56 561 C 60 559.5 63.5 558 65 556.5" stroke="#111" stroke-width="3.8" fill="none" stroke-linecap="round"/>
 <path d="M59 553.6 C 64 552.5 69.5 553.5 69.5 556.5 C 69.5 559.5 64 562.5 57 565 C 52 566.8 48 567.5 47.5 566 C 47 564.5 51 562.5 56 561 C 60 559.5 63.5 558 65 556.5" stroke="#dedede" stroke-width="1.6" fill="none" stroke-linecap="round"/>
 <!-- selection brush -->
 <circle cx="46.7" cy="652" r="16.2" stroke="#e6e6e6" stroke-width="2.6" fill="none" stroke-dasharray="5 3.4"/>
 <path d="M50 642 L65 630 C68.5 628 70.5 629.5 69.5 633 C68 637 63 643 58 647 L54 650 Z" fill="#e8843c"/>
 <path d="M49 643.5 L54.5 649.5 L49 660 C47 662 43 663 39.5 662 C36.5 660 35.5 657 37 653 Z" fill="#c08068"/>
 <!-- lasso selected -->
 <div></div>
</svg>
<div class="a" style="left:17px;top:698px;width:66px;height:66px;background:#1c1c1c;border-radius:10px"></div>
<svg class="a" style="left:0;top:690px" width="98" height="250" viewBox="0 690 98 250">
 <path d="M71 762.5 L81 752.5 L81 762.5Z" fill="#5e5e5e"/>
 <g transform="translate(17 698)" stroke="#f2a444" fill="none" stroke-linecap="round" stroke-linejoin="round">
  <path d="M51 51 C 47 48 43.5 46.5 40 47.5 C 36 48.5 32 49 29.5 47 C 26.5 45 26 42 28 39.5 C 30 37 34 37 36 38.5 C 38 40 37 43 34 44 C 30 45.5 25 43 22 42.5 C 16 42 13.5 37 15 31 C 17 24 26 17 37 14.5 C 46 12.5 52 14 51.5 20 C 51 26 44 32 36 37.5" stroke-width="2.8"/>
 </g>
 <!-- magic wand -->
 <path d="M39 792 L41.8 798.6 L48.8 799 L43.5 803.5 L45.5 810.5 L39.5 806.5 L33.5 810.5 L35.5 803.5 L30 799 L37 798.6Z" fill="#7078e2" stroke="#7078e2" stroke-width="2" stroke-linejoin="round"/>
 <rect x="50.5" y="793.5" width="7.5" height="7.5" transform="rotate(45 54.3 797.3)" fill="#7078e2"/>
 <rect x="61.5" y="794.6" width="5.5" height="5.5" transform="rotate(45 64.2 797.3)" fill="#7078e2"/>
 <path d="M46 808 L63.5 825.5" stroke="#22485a" stroke-width="5" stroke-linecap="butt"/>
 <path d="M63 825 L68 830" stroke="#d8d8d8" stroke-width="5" stroke-linecap="round"/>
 <path d="M71 844 L82 833 L82 844Z" fill="#5e5e5e"/>
 <!-- eyedropper -->
 <path d="M35 909 L50 894" stroke="#cfcfcf" stroke-width="4.5" stroke-linecap="round"/>
 <path d="M35 909 L50 894" stroke="#8a8a8a" stroke-width="1" stroke-linecap="round" opacity="0.5"/>
 <circle cx="61" cy="883.5" r="8.5" fill="#b87a60"/>
 <path d="M48 889 L56 897 L58.5 894.5 L50.5 886.5Z" fill="#b87a60"/>
</svg>
<!-- bottom left -->
<svg class="a" style="left:30px;top:1830px" width="40" height="130" viewBox="30 1830 40 130">
 <path d="M41.3 1840.5 L58.7 1857.9 M58.7 1840.5 L41.3 1857.9" stroke="#dcdcdc" stroke-width="2.3" stroke-linecap="round"/>
 <path d="M35.8 1919 H62" stroke="#dcdcdc" stroke-width="2.5" stroke-linecap="round"/>
 <path d="M44 1919 V1913.5 Q44 1912 45.5 1912 H53.5 Q55 1912 55 1913.5 V1919" stroke="#dcdcdc" stroke-width="2.3" fill="none"/>
 <path d="M38.2 1920 V1948 Q38.2 1949.5 39.7 1949.5 H58.3 Q59.8 1949.5 59.8 1948 V1920" stroke="#dcdcdc" stroke-width="2.4" fill="none"/>
 <path d="M45.3 1924 V1943 M51.5 1924 V1943" stroke="#dcdcdc" stroke-width="2.2"/>
</svg>
<!-- slider popover -->
<div class="a" style="left:100px;top:770px;width:100px;height:520px;background:#1f1f1f;border-radius:0 22px 22px 0"></div>
<div class="a txt" style="left:125px;top:787px;font-size:19px;color:#fff;line-height:22px">0.0px</div>
<div class="a" style="left:124px;top:826px;width:52px;height:382px;background:#2e2e2e;border-radius:14px"></div>
<div class="a" style="left:132px;top:1188px;width:36px;height:12px;background:#555;border-radius:6px"></div>
<svg class="a" style="left:120px;top:1220px" width="60" height="60" viewBox="0 0 60 60">
 <path d="M6 53 L19 40" stroke="#e6e6e6" stroke-width="2" stroke-linecap="round"/>
 <path d="M9 41 L14 48 M13 38 L18 45" stroke="#e6e6e6" stroke-width="2" stroke-linecap="round"/>
 <path d="M17 43 C14 34 17 24 26 16 C35 9 45 6 53 6 C55 14 52 24 45 32 C37 41 26 45 17 43Z" stroke="#e6e6e6" stroke-width="2" fill="none" stroke-linejoin="round"/>
 <path d="M23 39 C29 33 37 24 47 13" stroke="#e6e6e6" stroke-width="1.8" fill="none"/>
 <path d="M21 26 C24 30 26 31 29 31 M28 20 C31 24 34 25 36 25 M35 14 C37 17 40 19 42 19 M30 40 C33 37 37 37 40 38 M37 33 C40 31 43 31 46 31" stroke="#e6e6e6" stroke-width="1.8" fill="none" stroke-linecap="round"/>
</svg>

<!-- RIGHT PANEL -->
<svg class="a" style="left:2634px;top:100px" width="98" height="1948" viewBox="2634 100 98 1948">
 <!-- colour circle -->
 <circle cx="2681.7" cy="156.7" r="30.5" fill="#fff" stroke="#555" stroke-width="3"/>
 <clipPath id="cc"><circle cx="2681.7" cy="156.7" r="29"/></clipPath>
 <path d="M2657 182 L2706 131" stroke="#3a7fd0" stroke-width="4.2" clip-path="url(#cc)"/>
 <!-- stroke -->
 <path d="M2659.5 253 C2662 240 2672 232 2685 228 C2696 224 2702 220 2704 216 C2706.5 214 2706.5 218 2705 221 C2702 230 2694 236 2683 239 C2672 242 2665 247 2661.5 254 C2660.5 255.5 2659 255 2659.5 253Z" fill="#555"/>
 <!-- separator -->
 <rect x="2652" y="316" width="60" height="3" fill="#4a4a4a"/>
 <!-- brush -->
 <path d="M2680.5 363 L2697 347 C2700.5 344.5 2703.5 346 2702 350 C2700 355 2694 361 2687 368 C2685.5 369.5 2683.5 369.5 2682.5 368.5 L2680.5 366.5 C2679.5 365.5 2679.5 364 2680.5 363Z" fill="#9a9a9a"/>
 <path d="M2679 366 L2684 371 C2683 376 2679 378.5 2674 378.5 C2670 378.5 2666.5 377.5 2664.5 377 C2668 375 2669.5 372 2670.5 369.5 C2672 366 2675.5 365 2679 366Z" fill="#9a9a9a"/>
 <path d="M2671 385 C2677 386.5 2682 384 2685.5 379 C2689 374 2694 373 2699 374" stroke="#9a9a9a" stroke-width="3" fill="none" stroke-linecap="round"/>
 <!-- layers -->
 <path d="M2682 430.5 L2702 443.5 L2682 456.5 L2662 443.5Z" fill="#9a9a9a"/>
 <path d="M2682 437.5 L2695 445.5 L2682 453.5 L2669 445.5Z" fill="#232323"/>
 <path d="M2662.5 448 L2682 460.5 L2701.5 448" stroke="#9a9a9a" stroke-width="2.5" fill="none"/>
 <path d="M2662.5 453.5 L2682 466 L2701.5 453.5" stroke="#9a9a9a" stroke-width="2.5" fill="none"/>
 <!-- adjustments -->
 <g fill="#9a9a9a">
  <rect x="2666.5" y="512" width="31" height="2.6"/>
  <rect x="2666.5" y="519.4" width="13.5" height="12.6" rx="2.2"/>
  <rect x="2684" y="521" width="13.5" height="2.6"/>
  <rect x="2684" y="527.8" width="13.5" height="2.6"/>
  <rect x="2666.5" y="538.8" width="13.5" height="2.6"/>
  <rect x="2666.5" y="545.6" width="13.5" height="2.6"/>
  <circle cx="2690.7" cy="541.3" r="6.8"/>
 </g>
 <!-- channels -->
 <g stroke="#9a9a9a" fill="none" stroke-width="2.5" stroke-linecap="round">
  <circle cx="2682" cy="612" r="14.3"/>
  <path d="M2664.6 606.6 A18.2 18.2 0 0 1 2675.8 594.9 M2688.2 594.9 A18.2 18.2 0 0 1 2699.4 606.6 M2699.4 617.4 A18.2 18.2 0 0 1 2688.2 629.1 M2675.8 629.1 A18.2 18.2 0 0 1 2664.6 617.4"/>
  <path d="M2681.5 612.5 C 2686 609 2692 604 2687.5 598.5 M2681.5 612.5 C 2679 606 2672 603.5 2668.5 611 M2681.5 612.5 C 2681 619 2685 624.5 2690.5 623.5" stroke-width="2.3"/>
 </g>
 <!-- fx -->
 <g fill="#9a9a9a">
  <rect x="2665.6" y="675.7" width="31.4" height="2.6"/>
  <rect x="2665.6" y="709.8" width="31.4" height="2.6"/>
  <path d="M2665.6 683.5 H2681 V689 H2671.6 V704.5 H2665.6Z"/>
 </g>
 <path d="M2680.5 683.5 L2695 704.5 M2695 683.5 L2680.5 704.5" stroke="#9a9a9a" stroke-width="5.2"/>
 <!-- half circle -->
 <circle cx="2682" cy="776" r="17" stroke="#9a9a9a" stroke-width="2.4" fill="none"/>
 <path d="M2693 765 A12.5 12.5 0 0 1 2673 787 Z" fill="#9a9a9a"/>
 <!-- text box -->
 <rect x="2667.2" y="834.2" width="29.4" height="33.6" stroke="#9a9a9a" stroke-width="2.4" fill="none"/>
</svg>
<div class="a txt" style="left:2673.5px;top:830px;font-size:29px;color:#9a9a9a;line-height:32px">a</div>
<div class="a txt" style="left:2668.5px;top:277px;font-size:16.5px;color:#9a9a9a;line-height:18px">0pt</div>
<div class="a txt" style="left:2665px;top:872px;font-size:16.5px;color:#9a9a9a;line-height:18px">12pt</div>
<svg class="a" style="left:2634px;top:900px" width="98" height="1148" viewBox="2634 900 98 1148">
 <!-- transform -->
 <rect x="2667.5" y="931" width="29.5" height="29.5" stroke="#9a9a9a" stroke-width="2.2" fill="none"/>
 <g fill="#9a9a9a">
  <circle cx="2667.5" cy="931" r="3.6"/><circle cx="2682.2" cy="931" r="3.6"/><circle cx="2697" cy="931" r="3.6"/>
  <circle cx="2667.5" cy="945.8" r="3.6"/><circle cx="2697" cy="945.8" r="3.6"/>
  <circle cx="2667.5" cy="960.5" r="3.6"/><circle cx="2682.2" cy="960.5" r="3.6"/><circle cx="2697" cy="960.5" r="3.6"/>
  <rect x="2680" y="943.6" width="4.4" height="4.4"/>
 </g>
 <!-- move -->
 <g fill="#9a9a9a">
  <path d="M2682 1007 L2690 1016.5 H2674Z"/>
  <path d="M2682 1048.4 L2690 1039 H2674Z"/>
  <path d="M2661.5 1027.7 L2671 1019.7 V1035.7Z"/>
  <path d="M2702.5 1027.7 L2693 1019.7 V1035.7Z"/>
 </g>
 <rect x="2674" y="1019.5" width="16.5" height="16.5" stroke="#9a9a9a" stroke-width="2.2" fill="none" stroke-dasharray="5.5 2.8" stroke-dashoffset="2.5"/>
 <!-- clock -->
 <circle cx="2681" cy="1109" r="17.8" stroke="#9a9a9a" stroke-width="2.3" fill="none"/>
 <path d="M2699.5 1103 Q2702 1103 2702 1106 V1112 Q2702 1115 2699.5 1115Z" fill="#9a9a9a"/>
 <circle cx="2681" cy="1109" r="12.5" stroke="#9a9a9a" stroke-width="2.2" fill="none" stroke-dasharray="7 3.5" stroke-dashoffset="-3"/>
 <path d="M2681 1095.5 V1109 H2693" stroke="#9a9a9a" stroke-width="2.4" fill="none"/>
 <circle cx="2681" cy="1109" r="3" fill="#9a9a9a"/>
 <!-- doc settings -->
 <path d="M2672 1185 V1173.2 H2693 L2702 1182 V1210.7 H2688" stroke="#9a9a9a" stroke-width="2.2" fill="none"/>
 <path d="M2693.5 1173.2 V1181.5 H2702Z" fill="#9a9a9a"/>
 <g transform="translate(2675.5 1199)">
  <circle r="9" fill="#9a9a9a"/>
  <g fill="#9a9a9a">
   <rect x="-2.6" y="-13.2" width="5.2" height="26.4" rx="1"/>
   <rect x="-2.6" y="-13.2" width="5.2" height="26.4" rx="1" transform="rotate(60)"/>
   <rect x="-2.6" y="-13.2" width="5.2" height="26.4" rx="1" transform="rotate(120)"/>
  </g>
  <circle r="4.2" fill="#232323"/>
 </g>
 <!-- arrows -->
 <path d="M2687.8 1756.5 L2676 1767.5 L2687.8 1778.5" stroke="#8a8a8a" stroke-width="2.3" fill="none" stroke-linecap="round"/>
 <path d="M2676.5 1838.5 L2688.3 1849.5 L2676.5 1860.5" stroke="#8a8a8a" stroke-width="2.3" fill="none" stroke-linecap="round"/>
 <!-- help -->
 <rect x="2667" y="1915.8" width="30" height="30" rx="5" fill="#9a9a9a"/>
 <path d="M2677.6 1925 C 2680 1922.8 2686.3 1922.6 2686.6 1927 C 2686.8 1930 2683.8 1931 2682.6 1932.2 C 2681.8 1933 2681.6 1934 2681.6 1935" stroke="#232323" stroke-width="3.6" fill="none"/>
 <circle cx="2681.6" cy="1938.6" r="2.3" fill="#232323"/>
</svg>


<!-- TOP MENU CONTENT -->
<div class="ib" style="left:916px;top:488px"></div>
<div class="ib" style="left:916px;top:576px"></div>
<div class="ib" style="left:1232px;top:488px"></div>
<div class="ib" style="left:1232px;top:576px"></div>
<div class="ib" style="left:1548px;top:488px"></div>
<div class="ib" style="left:1548px;top:576px"></div>
<svg class="a" style="left:900px;top:470px" width="760" height="190" viewBox="900 470 760 190">
 <!-- duplicate -->
 <path d="M950.8 510 H942 Q940.8 510 940.8 511.2 V538.8 Q940.8 540 942 540 H963.8 Q965 540 965 538.8 V530" stroke="#dcdcdc" stroke-width="2.2" fill="none"/>
 <rect x="951.8" y="500.6" width="23" height="29" rx="1.2" stroke="#dcdcdc" stroke-width="2.2" fill="none"/>
 <!-- cut -->
 <g stroke="#dcdcdc" fill="none" stroke-width="2.8">
  <ellipse cx="944.8" cy="594" rx="5.4" ry="4.6" transform="rotate(20 944.8 594)"/>
  <ellipse cx="944" cy="622.3" rx="5.3" ry="4.5" transform="rotate(-20 944 622.3)"/>
 </g>
 <g fill="#dcdcdc">
  <path d="M947 597.5 L956 603 L953.5 605.8 L944.5 600.5 Z"/>
  <path d="M953.5 606 L975 591.5 Q978.5 590.5 977.8 593.5 L958.5 609.5 C955.5 613 953 617.5 949.5 620 L946 617.5 C950 615.5 952 611.5 953.5 606 Z"/>
  <path d="M960.3 612.3 L963.3 609.6 L977.8 621.8 Q977.5 624.6 974.2 623.3 Z"/>
 </g>
 <!-- copy (clipboard) -->
 <rect x="1262.5" y="506" width="21" height="33.5" rx="1.5" stroke="#dcdcdc" stroke-width="2.2" fill="none"/>
 <rect x="1267.5" y="503" width="11" height="6.5" rx="1" fill="#dcdcdc"/>
 <path d="M1267 524 H1279 M1267 532 H1279" stroke="#dcdcdc" stroke-width="2.2"/>
 <rect x="1267" y="513.5" width="12" height="4" fill="#dcdcdc"/>
 <!-- paste (disabled) -->
 <g stroke="#686868" stroke-width="2.2" fill="none">
  <path d="M1269 623.5 H1258.5 V592.5 H1277"/>
  <rect x="1272.3" y="608.5" width="20" height="19"/>
  <path d="M1262 610.5 H1267 M1262 618 H1267"/>
 </g>
 <rect x="1262.5" y="588.5" width="11" height="6" rx="1" fill="#686868"/>
 <rect x="1262" y="599" width="13" height="4" fill="#686868"/>
 <!-- paste style (disabled) -->
 <g stroke="#686868" stroke-width="2.2" fill="none">
  <rect x="1582.5" y="500.5" width="15" height="14.5" rx="1.5"/>
  <circle cx="1579.5" cy="532" r="7.8"/>
  <path d="M1598 524 L1605 539.5 H1590.5Z" stroke-linejoin="round"/>
 </g>
 <!-- delete -->
 <g stroke="#dcdcdc" stroke-width="2.2" fill="none">
  <path d="M1574 592.2 H1602"/>
  <path d="M1584 592 V587.5 Q1584 586.5 1585 586.5 H1591.5 Q1592.5 586.5 1592.5 587.5 V592"/>
  <path d="M1577.5 593 V622.5 Q1577.5 624 1579 624 H1597.5 Q1599 624 1599 622.5 V593"/>
  <path d="M1585 597.5 V618.5 M1591.5 597.5 V618.5"/>
 </g>
</svg>
<div class="lbl" style="left:1025px;top:504px">Duplicate</div>
<div class="lbl" style="left:1025px;top:592px">Cut</div>
<div class="lbl" style="left:1340.5px;top:504px">Copy</div>
<div class="lbl" style="left:1340.5px;top:592px;color:#686868">Paste</div>
<div class="lbl" style="left:1656.5px;top:504px;color:#686868">Paste Style</div>
<div class="lbl" style="left:1656.5px;top:592px">Delete</div>

<!-- BOTTOM MENU BUTTONS -->
<div class="gb" style="left:916px;top:784px">Group</div>
<div class="gb" style="left:1232px;top:784px">Invert Pixel<br>Selection</div>
<div class="gb" style="left:1548px;top:784px;width:268px">Rasterise</div>
<div class="gb" style="left:916px;top:960px">Select All</div>
<div class="gb" style="left:1232px;top:960px">Deselect</div>
<div class="gb" style="left:1548px;top:960px">Solo</div>
<div class="gb" style="left:916px;top:1136px">Rasterise to Mask</div>
<div class="gb" style="left:1232px;top:1136px">New Pixel Layer</div>
<div class="gb" style="left:1548px;top:1136px">Selection From<br>Layer</div>

<!-- STATUS -->
<div class="a txt" style="left:121px;top:1971px;font-size:24px;color:#a8a8a8;line-height:28px;letter-spacing:0.68px;white-space:nowrap"><b style="color:#b4b4b4">Drag</b> to create / move marquee. <b style="color:#b4b4b4">Drag+^</b> to add. <b style="color:#b4b4b4">Drag+⌥</b> to subtract. <b style="color:#b4b4b4">Drag+⌘</b> to move layer with selection. <b style="color:#b4b4b4">Click+⇧</b> to add straight edges</div>
<div class="a" style="left:1021px;top:2022px;width:690px;height:11px;background:#fff;border-radius:6px"></div>

</body></html>
